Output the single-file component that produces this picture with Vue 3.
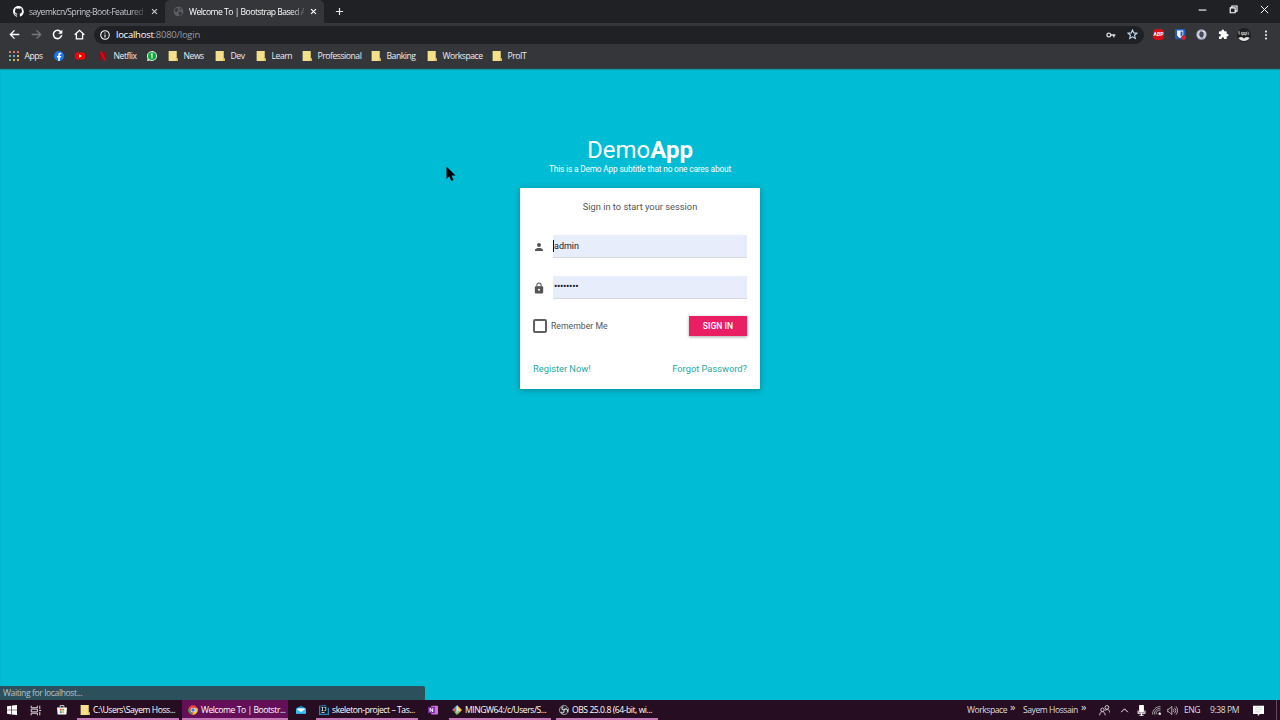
<template>
    <div class="screen">
        <svg class="sprite">
            <symbol id="github" viewBox="0 0 16 16"><path fill="#fff" d="M8 0C3.6 0 0 3.6 0 8c0 3.500 2.300 6.500 5.500 7.600.4.100.5-.2.500-.4v-1.500c-2.200.5-2.700-1-2.700-1-.4-.9-.9-1.200-.9-1.200-.7-.5.100-.5.100-.5.800.1 1.200.8 1.200.8.7 1.300 1.900.9 2.300.7.100-.5.300-.9.500-1.100-1.800-.2-3.600-.9-3.600-4 0-.9.300-1.600.8-2.100-.1-.2-.4-1 .1-2.100 0 0 .7-.2 2.200.8a7.500 7.500 0 0 1 4 0c1.500-1 2.200-.8 2.200-.8.5 1.100.2 1.900.1 2.100.5.600.8 1.300.8 2.100 0 3.100-1.900 3.700-3.600 3.900.3.300.5.800.5 1.500v2.200c0 .2.100.5.600.4A8 8 0 0 0 8 0z" /></symbol>
            <symbol id="world" viewBox="0 0 16 16"><circle cx="8" cy="8" r="7" fill="#5c5f63" /><path d="M3 4l4-1 1 3-3 3-2-1zM9 8l4 1-1 4-3 1-1-3zM10 2l3 3-3 1z" fill="#35363a" /></symbol>
            <symbol id="close" viewBox="0 0 10 10"><path d="M1.500 1.500l7 7m0-7l-7 7" stroke="currentColor" stroke-width="1.700" /></symbol>
            <symbol id="plus" viewBox="0 0 10 10"><path d="M5 1v8M1 5h8" stroke="#e8eaed" stroke-width="1.300" /></symbol>
            <symbol id="back" viewBox="0 0 16 16"><path d="M15 8H2m6-6L2 8l6 6" fill="none" stroke="currentColor" stroke-width="2" /></symbol>
            <symbol id="forward" viewBox="0 0 16 16"><path d="M1 8h13M8 2l6 6-6 6" fill="none" stroke="currentColor" stroke-width="2" /></symbol>
            <symbol id="reload" viewBox="0 0 16 16"><path d="M13 4.500A6 6 0 1 0 14 9" fill="none" stroke="#fff" stroke-width="2.200" /><path d="M15 1v6H9z" fill="#fff" /></symbol>
            <symbol id="home" viewBox="0 0 16 16"><path d="M1 8.500L8 2l7 6.500M3.500 7v7.500h9V7" fill="none" stroke="#fff" stroke-width="1.900" /></symbol>
            <symbol id="info" viewBox="0 0 16 16"><circle cx="8" cy="8" r="6.800" fill="none" stroke="#fff" stroke-width="1.700" /><path d="M8 7v5M8 4v1.700" stroke="#fff" stroke-width="1.800" /></symbol>
            <symbol id="apps" viewBox="0 0 10 10"><path d="M0 0h2v2H0zM4 0h2v2H4zM8 0h2v2H8z" fill="#d9776b" /><path d="M0 4h2v2H0z" fill="#66b87c" /><path d="M4 4h2v2H4z" fill="#6b9ee8" /><path d="M8 4h2v2H8zM4 8h2v2H4zM8 8h2v2H8z" fill="#d9b35b" /><path d="M0 8h2v2H0z" fill="#66b87c" /></symbol>
            <symbol id="facebook" viewBox="0 0 16 16"><circle cx="8" cy="8" r="8" fill="#1877f2" /><path d="M6.800 16v-5.500H4.700V8h2.100V6.300c0-2.300 1.300-3.400 3.200-3.400h1.700v2.200h-1.100c-1 0-1.300.6-1.300 1.200V8h2.300l-.4 2.500H9.300V16z" fill="#fff" /></symbol>
            <symbol id="youtube" viewBox="0 0 16 16"><rect y="2.500" width="16" height="11" rx="3" fill="#f00" /><path d="M6.500 5.300v5.400L11 8z" fill="#fff" /></symbol>
            <symbol id="netflix" viewBox="0 0 16 16"><path d="M3 1h3.500v14H3zM9.500 1H13v14H9.500z" fill="#9c0712" /><path d="M3 1h3.500L13 15H9.500z" fill="#d70b17" /></symbol>
            <symbol id="whatsapp" viewBox="0 0 16 16"><path d="M8 0a8 8 0 0 1 0 16l-4-1-4 1 1-4A8 8 0 0 1 8 0z" fill="#e8f5ea" /><circle cx="8" cy="8" r="6.500" fill="#09a83c" /><path d="M6 6l2-1.700V12" fill="none" stroke="#fff" stroke-width="1.700" /></symbol>
            <symbol id="folder" viewBox="0 0 16 16"><path d="M1 0h13v11l1.500 1v4H1z" fill="#f4df8b" /><path d="M13 11l2.500 1v4H12z" fill="#e3c369" /></symbol>
            <symbol id="key" viewBox="0 0 16 12"><circle cx="4.500" cy="6" r="3" fill="none" stroke="#ddd" stroke-width="2" /><path d="M7 6h8M12.500 6v3.500" stroke="#ddd" stroke-width="2.300" /></symbol>
            <symbol id="star" viewBox="0 0 16 16"><path d="M8 1.500l1.900 4.200 4.600.4-3.500 3 1.100 4.600L8 11.300l-4.100 2.400L5 9.100l-3.500-3 4.600-.4z" fill="none" stroke="#c3ddf3" stroke-width="1.600" /></symbol>
            <symbol id="shield" viewBox="0 0 16 16"><rect width="15" height="15" rx="2" fill="#205dc0" /><path d="M3 2h9v6c0 3-4 5-4.500 5S3 11 3 8z" fill="#fff" /><path d="M8 3.500h3V8c0 1.500-1.500 2.500-3 3z" fill="#205dc0" /><circle cx="12.500" cy="12.500" r="3.500" fill="#cf2336" /></symbol>
            <symbol id="swirl" viewBox="0 0 16 16"><circle cx="8" cy="8" r="7.500" fill="#a9aec2" /><ellipse cx="8" cy="8" rx="3" ry="4.300" fill="#44485b" /><path d="M5 3c-5 5-2 9 2 10M9 3c5 0 6 5 2 10" fill="none" stroke="#e4e6ee" stroke-width="1.500" /></symbol>
            <symbol id="puzzle" viewBox="0 0 24 24"><path fill="#fff" d="M20.500 11H19V7a2 2 0 0 0-2-2h-4V3.500a2.500 2.500 0 0 0-5 0V5H4a2 2 0 0 0-2 2v3.800h1.500a2.700 2.700 0 0 1 0 5.400H2V20c0 1.100.9 2 2 2h3.800v-1.500a2.700 2.700 0 0 1 5.400 0V22H17a2 2 0 0 0 2-2v-4h1.500a2.500 2.500 0 0 0 0-5z" /></symbol>
            <symbol id="avatar" viewBox="0 0 16 16"><circle cx="8" cy="8" r="8" fill="#1d1d1f" /><path d="M1.500 11.500q3-1.500 4.500-1l2 1.500 2-1.500q2-.5 4.500 1a8 8 0 0 1-13 0z" fill="#e6e6e6" /><path d="M1 4l2-1 1 4-2 1zM12 3l2 2v3h-2z" fill="#777" /><circle cx="8" cy="5.700" r="3.400" fill="#aaa" /><path d="M4.500 4.500c0-4 7-4 7 0zM5.500 5.300h2v1h-2zM8.500 5.300h2v1h-2zM6.500 8h3v1.500h-3z" fill="#202020" /></symbol>
            <symbol id="dots" viewBox="0 0 16 16"><circle cx="8" cy="2.500" r="1.700" fill="#eee" /><circle cx="8" cy="8" r="1.700" fill="#eee" /><circle cx="8" cy="13.500" r="1.700" fill="#eee" /></symbol>
            <symbol id="minimize" viewBox="0 0 10 10"><path d="M1.500 5.500h7" stroke="#fff" /></symbol>
            <symbol id="restore" viewBox="0 0 10 10"><path d="M2 3.500h4.500V8H2zM3.500 3V1.800h4.700v4.700H7" fill="none" stroke="#fff" /></symbol>
            <symbol id="exit" viewBox="0 0 10 10"><path d="M1.700 1.700l6.600 6.600m0-6.600L1.700 8.300" stroke="#fff" stroke-width=".9" /></symbol>
            <symbol id="person" viewBox="4 4 16 16"><path fill="#555" d="M12 12a4 4 0 1 0 0-8 4 4 0 0 0 0 8zm0 2c-2.700 0-8 1.300-8 4v2h16v-2c0-2.700-5.300-4-8-4z" /></symbol>
            <symbol id="lock" viewBox="3 0 18 23"><path fill="#555" d="M18 8h-1V6A5 5 0 0 0 7 6v2H6a2 2 0 0 0-2 2v10c0 1.100.9 2 2 2h12a2 2 0 0 0 2-2V10a2 2 0 0 0-2-2zm-6 9a2 2 0 1 1 0-4 2 2 0 0 1 0 4zM8.900 8V6a3.100 3.100 0 0 1 6.200 0v2z" /></symbol>
            <symbol id="windows" viewBox="0 0 16 16"><path d="M0 2l7-1v6.500H0zM8 .9L16 0v7.500H8zM0 8.500h7V15l-7-1zM8 8.500h8V16l-8-.9z" fill="#fff" /></symbol>
            <symbol id="taskview" viewBox="0 0 16 16"><path d="M1 1v3h9V1M1 15v-3h9v3M1 6h9v4H1zM13.500 1v5m0 4v5M12.500 8h3" fill="none" stroke="#eee" stroke-width="1.300" /></symbol>
            <symbol id="store" viewBox="0 0 16 16"><path d="M5 4V1h6v3" fill="none" stroke="#fff" stroke-width="1.300" /><path d="M0 4h16l-1 11H1z" fill="#fff" /><path d="M4.500 6h3v3h-3z" fill="#e44f2d" /><path d="M8.500 6h3v3h-3z" fill="#74ad26" /><path d="M4.500 10h3v3h-3z" fill="#2293d1" /><path d="M8.500 10h3v3h-3z" fill="#eeb31f" /></symbol>
            <symbol id="chrome" viewBox="0 0 16 16"><circle cx="8" cy="8" r="7.500" fill="#e94c3d" /><path d="M1 5l5 8 1 2.400A7.500 7.500 0 0 1 1 5z" fill="#34a853" /><path d="M8 5h7a7.500 7.500 0 0 1-8 10.400L11 9z" fill="#f7c739" /><circle cx="8" cy="8" r="3.800" fill="#fff" /><circle cx="8" cy="8" r="2.900" fill="#347ce1" /></symbol>
            <symbol id="mail" viewBox="0 0 16 16"><path d="M0 5l8-4 8 4v9H0z" fill="#1685d2" /><path d="M2 5h12v4l-6 3-6-3z" fill="#eef9ff" /><path d="M0 6l8 5 8-5v8H0z" fill="#3bbdf1" /></symbol>
            <symbol id="idea" viewBox="0 0 16 16"><path d="M0 1l10-1 6 5v11H0z" fill="#258ab9" /><path d="M2 2h12v12H2z" fill="#081522" /><path d="M4 4h3M5.500 4v5M4 9h3M8.500 4H11v4q0 1.500-2.500 1M4 12h5" fill="none" stroke="#fff" stroke-width="1.200" /></symbol>
            <symbol id="onenote" viewBox="0 0 16 16"><rect x="5" y="1" width="11" height="14" rx="1" fill="#ca75dd" /><rect y="3" width="11" height="10" fill="#7e28a4" /><path d="M3.500 11V5l4 6V5" fill="none" stroke="#fff" stroke-width="1.500" /></symbol>
            <symbol id="git" viewBox="0 0 16 16"><path d="M8 0v7L5 11 0 8z" fill="#5895d8" /><path d="M8 0l8 8-4 4-4-5z" fill="#f1c746" /><path d="M8 7l5 4-5 5-4-4z" fill="#77bc61" /><path d="M8 2v10M8 6l4 4" stroke="#fff" stroke-width="1.400" /><circle cx="4" cy="8" r="2" fill="#e85954" /></symbol>
            <symbol id="obs" viewBox="0 0 16 16"><circle cx="8" cy="8" r="7.300" fill="#222027" stroke="#ddd" /><path d="M8 8c-5-1-4-5-1-5m1 5c4-4 7 0 5 3M8 8c1 5-3 6-5 3" fill="none" stroke="#ddd" stroke-width="1.700" /></symbol>
            <symbol id="people" viewBox="0 0 16 16"><circle cx="5" cy="7" r="2.500" fill="none" stroke="#ddd" stroke-width="1.300" /><circle cx="11.500" cy="3.500" r="2.700" fill="none" stroke="#ddd" stroke-width="1.300" /><path d="M1 15c0-7 8-7 8 0M8.500 8c4-3 7-1 7 3" fill="none" stroke="#ddd" stroke-width="1.300" /></symbol>
            <symbol id="up" viewBox="0 0 16 16"><path d="M2 11l6-6 6 6" fill="none" stroke="#fff" stroke-width="1.700" /></symbol>
            <symbol id="mic" viewBox="0 0 16 16"><rect x="4.500" y="0" width="7" height="11" rx="1" fill="#fff" /><path d="M3 8v4h10V8M8 11v5M5 15h6" stroke="#fff" stroke-width="1.500" fill="none" /></symbol>
            <symbol id="wifi" viewBox="0 0 16 16"><path d="M1 15C1 7 7 1 15 1M4 15C4 9 9 4 15 4M7 15c0-4 3-8 8-8M11 15c0-2 2-4 4-4" fill="none" stroke="#bbb" stroke-width="1.500" /><circle cx="14" cy="14" r="2" fill="#eee" /></symbol>
            <symbol id="volume" viewBox="0 0 16 16"><path d="M1 6h2l4-4v12l-4-4H1zM9 6q2 2 0 4M11 4q4 4 0 8M13 2q5 6 0 12" fill="none" stroke="#ddd" stroke-width="1.100" /></symbol>
            <symbol id="notice" viewBox="0 0 16 16"><path d="M0 1h16v12h-6l-3 3v-3H0z" fill="#fff" /><path d="M3 4h10M3 7h10M3 10h7" stroke="#aaa" stroke-width=".7" /></symbol>
        </svg>

        <header class="tabs">
            <div class="tab">
                <svg class="icon"><use href="#github" /></svg>
                <span class="tab-title">sayemkcn/Spring-Boot-Featured</span>
                <svg class="tab-close"><use href="#close" /></svg>
            </div>
            <div class="tab active">
                <svg class="icon"><use href="#world" /></svg>
                <span class="tab-title">Welcome To | Bootstrap Based A</span>
                <svg class="tab-close"><use href="#close" /></svg>
            </div>
            <svg class="new-tab"><use href="#plus" /></svg>
            <div class="window-buttons">
                <svg v-for="name in ['minimize', 'restore', 'exit']" :key="name"><use :href="'#' + name" /></svg>
            </div>
        </header>

        <div class="toolbar">
            <svg class="nav-icon"><use href="#back" /></svg>
            <svg class="nav-icon muted"><use href="#forward" /></svg>
            <svg class="nav-icon"><use href="#reload" /></svg>
            <svg class="nav-icon"><use href="#home" /></svg>
            <div class="address">
                <svg class="icon"><use href="#info" /></svg>
                <span class="url">localhost<span class="path">:8080/login</span></span>
                <svg class="key"><use href="#key" /></svg>
                <svg class="star"><use href="#star" /></svg>
            </div>
            <div class="extensions">
                <span class="abp">ABP</span>
                <svg v-for="name in extensions" :key="name" :class="name"><use :href="'#' + name" /></svg>
            </div>
        </div>

        <nav class="bookmarks">
            <div class="bookmark" v-for="item in bookmarks" :key="item.icon + item.text">
                <svg class="icon"><use :href="'#' + item.icon" /></svg>
                <span v-if="item.text">{{ item.text }}</span>
            </div>
        </nav>

        <main class="page">
            <div class="logo">
                <h1>Demo<b>App</b></h1>
                <small>This is a Demo App subtitle that no one cares about</small>
            </div>
            <form class="card" @submit.prevent>
                <p class="msg">Sign in to start your session</p>
                <div class="field">
                    <svg class="person"><use href="#person" /></svg>
                    <div class="input"><i class="caret"></i>{{ username }}</div>
                </div>
                <div class="field">
                    <svg class="lock"><use href="#lock" /></svg>
                    <div class="input password">••••••••</div>
                </div>
                <div class="actions">
                    <span class="checkbox"></span>
                    <label>Remember Me</label>
                    <button>SIGN IN</button>
                </div>
                <div class="links">
                    <a>Register Now!</a>
                    <a>Forgot Password?</a>
                </div>
            </form>
            <div class="status">Waiting for localhost...</div>
            <svg class="cursor" viewBox="0 0 10 16"><path d="M.5.500v12.500l2.800-2.700 2 4.700 2.200-1-2-4.500h4z" fill="#000" /></svg>
        </main>

        <footer class="taskbar">
            <div class="tasks">
                <div class="task" v-for="item in tasks" :key="item.icon" :class="{ open: item.text, current: item.icon === 'chrome' }">
                    <svg class="icon" :class="item.icon"><use :href="'#' + item.icon" /></svg>
                    <span v-if="item.text">{{ item.text }}</span>
                </div>
            </div>
            <div class="tray">
                <span>Workspace</span>
                <span class="more">»</span>
                <span>Sayem Hossain</span>
                <span class="more">»</span>
                <svg v-for="name in ['people', 'up', 'mic', 'wifi', 'volume']" :key="name" :class="name"><use :href="'#' + name" /></svg>
                <span>ENG</span>
                <span>9:38 PM</span>
                <svg class="notice"><use href="#notice" /></svg>
                <i class="desktop"></i>
            </div>
        </footer>
    </div>
</template>

<script setup>
    import { ref } from 'vue'

    const username = ref('admin')

    const extensions = ['shield', 'swirl', 'puzzle', 'avatar', 'dots']

    // 书签栏
    const bookmarks = [
        { icon: 'apps', text: 'Apps' },
        { icon: 'facebook', text: '' },
        { icon: 'youtube', text: '' },
        { icon: 'netflix', text: 'Netflix' },
        { icon: 'whatsapp', text: '' },
        { icon: 'folder', text: 'News' },
        { icon: 'folder', text: 'Dev' },
        { icon: 'folder', text: 'Learn' },
        { icon: 'folder', text: 'Professional' },
        { icon: 'folder', text: 'Banking' },
        { icon: 'folder', text: 'Workspace' },
        { icon: 'folder', text: 'ProIT' }
    ]

    // 任务栏
    const tasks = [
        { icon: 'windows' },
        { icon: 'taskview' },
        { icon: 'store' },
        { icon: 'folder', text: 'C:\\Users\\Sayem Hoss...' },
        { icon: 'chrome', text: 'Welcome To | Bootstr...' },
        { icon: 'mail' },
        { icon: 'idea', text: 'skeleton-project – Tas...' },
        { icon: 'onenote' },
        { icon: 'git', text: 'MINGW64:/c/Users/S...' },
        { icon: 'obs', text: 'OBS 25.0.8 (64-bit, wi...' }
    ]
</script>

<style>
    body{
        background: #00bcd4;
        overflow: hidden;
    }
</style>

<style scoped>
    .screen{
        width: 1280px;
        height: 720px;
        display: flex;
        flex-direction: column;
        box-sizing: border-box;
        font-family: "Open Sans", "Noto Sans", sans-serif;
        font-size: 8.600px;
        letter-spacing: -.45px;
        color: #eee;
        white-space: nowrap;
    }
    .screen *{
        box-sizing: border-box;
    }
    .sprite{
        position: absolute;
        width: 0;
        height: 0;
    }
    svg{
        display: block;
        flex: none;
    }
    .icon{
        width: 10px;
        height: 10px;
    }
    .tabs{
        height: 23px;
        flex: none;
        display: flex;
        background: #202124;
    }
    .tab{
        width: 165px;
        height: 23px;
        padding: 0 7px 0 13px;
        display: flex;
        align-items: center;
        color: #c4c7cc;
    }
    .tab .icon{
        width: 11px;
        height: 11px;
        margin-right: 5px;
    }
    .tab.active{
        width: 159px;
        padding: 0 7px 0 8px;
        border-radius: 5px 5px 0 0;
        background: #35363a;
        color: #fff;
    }
    .tab-title{
        width: 115px;
        letter-spacing: -.52px;
        -webkit-mask-image: linear-gradient(to right, #000 88%, rgba(0, 0, 0, .2));
        mask-image: linear-gradient(to right, #000 88%, rgba(0, 0, 0, .2));
    }
    .tab-close{
        width: 7px;
        height: 7px;
        margin-left: auto;
    }
    .new-tab{
        width: 9px;
        height: 9px;
        margin: 7px 0 0 11px;
    }
    .window-buttons{
        display: flex;
        gap: 20px;
        margin: 4px 10px 0 auto;
    }
    .window-buttons svg{
        width: 11px;
        height: 11px;
    }
    .toolbar{
        height: 23px;
        flex: none;
        display: flex;
        align-items: center;
        background: #35363a;
        padding: 0 9px;
        color: #fff;
    }
    .nav-icon{
        width: 11px;
        height: 11px;
        margin-right: 10.500px;
    }
    .muted{
        color: #77797d;
    }
    .address{
        width: 1050px;
        height: 18px;
        border-radius: 9px;
        background: #202124;
        display: flex;
        align-items: center;
        padding: 0 6px;
        margin-left: -1px;
        font-size: 9.500px;
        letter-spacing: -.25px;
    }
    .url{
        margin-left: 6px;
        margin-right: auto;
    }
    .path{
        color: #999ca1;
    }
    .key{
        width: 10px;
        height: 8px;
    }
    .star{
        width: 11px;
        height: 11px;
        margin-left: 11px;
    }
    .extensions{
        display: flex;
        align-items: center;
        gap: 10.500px;
        margin-left: 9px;
    }
    .extensions svg{
        width: 11px;
        height: 11px;
    }
    .abp{
        width: 11px;
        height: 11px;
        line-height: 11px;
        border-radius: 4px;
        background: #d80d16;
        text-align: center;
        font-family: Roboto, sans-serif;
        font-size: 5px;
        font-weight: 700;
        letter-spacing: 0;
    }
    .extensions .avatar{
        width: 14px;
        height: 14px;
        margin-left: -2px;
    }
    .extensions .dots{
        width: 10px;
        height: 10px;
        margin-left: -1px;
    }
    .bookmarks{
        height: 23px;
        flex: none;
        display: grid;
        grid-template-columns: 45px 21px 23px 49px 21px 47px 41px 46px 69px 56px 65px 45px;
        align-items: center;
        padding-left: 9px;
        padding-bottom: 3px;
        background: #35363a;
        border-bottom: 1px solid #2b454d;
    }
    .bookmark{
        display: flex;
        align-items: center;
        gap: 5.500px;
    }
    .page{
        position: relative;
        height: 631px;
        flex: none;
        padding-top: 67px;
        background: #00bcd4;
        font-family: Roboto, sans-serif;
        letter-spacing: 0;
        box-shadow: inset 0 1px 1px #168fa0;
    }
    .logo{
        text-align: center;
        color: #fff;
    }
    .logo h1{
        margin: 0;
        font-size: 24px;
        line-height: 28px;
        font-weight: 400;
    }
    .logo small{
        display: block;
        font-size: 8.300px;
        line-height: 10px;
        letter-spacing: -.16px;
    }
    .card{
        width: 240px;
        height: 201px;
        margin: 14px auto 0;
        padding: 13px;
        background: #fff;
        box-shadow: 0 1px 6px rgba(0, 0, 0, .3);
        color: #555;
        font-size: 9.300px;
    }
    .msg{
        margin: 0 0 28px;
        line-height: 12px;
        padding-bottom: 1px;
        text-align: center;
    }
    .field{
        display: flex;
        height: 23px;
        margin: -7px 0 25px;
        align-items: center;
    }
    .person{
        width: 8px;
        height: 8px;
        margin: 1px 12px 0 2px;
    }
    .lock{
        width: 10px;
        height: 12px;
        margin: 0 11px 0 1px;
    }
    .input{
        width: 194px;
        height: 23px;
        margin-left: -2px;
        padding-left: 1px;
        line-height: 22px;
        background: #e8edfb;
        border-bottom: 1px solid #d8dae2;
        font-size: 9px;
        color: #171923;
        position: relative;
    }
    .caret{
        position: absolute;
        left: 0;
        top: 5px;
        width: 1px;
        height: 12px;
        background: #111;
    }
    .password{
        font-size: 10px;
        letter-spacing: -.35px;
    }
    .field + .field{
        margin-top: -7px;
        margin-bottom: 17px;
    }
    .actions{
        display: flex;
        align-items: center;
        height: 20px;
        font-size: 8.700px;
    }
    .checkbox{
        width: 14px;
        height: 14px;
        margin-right: 4px;
        border: 2px solid #606060;
        border-radius: 2px;
    }
    button{
        width: 58px;
        height: 20px;
        margin-left: auto;
        padding: 0;
        border: 0;
        background: #e91e63;
        box-shadow: 0 1px 3px rgba(0, 0, 0, .35);
        color: #fff;
        font: 500 8.600px Roboto, sans-serif;
    }
    .links{
        display: flex;
        justify-content: space-between;
        margin-top: 26px;
        line-height: 13px;
        color: #25aaa4;
    }
    .status{
        position: absolute;
        left: 0;
        bottom: 0;
        width: 425px;
        height: 14px;
        padding-left: 3px;
        background: #2c505c;
        border-radius: 0 2px 0 0;
        line-height: 14px;
        font-family: "Open Sans", sans-serif;
        letter-spacing: -.4px;
        color: #b5c3c7;
    }
    .cursor{
        position: absolute;
        left: 446px;
        top: 97px;
        width: 10px;
        height: 16px;
    }
    .taskbar{
        height: 20px;
        flex: none;
        display: flex;
        justify-content: space-between;
        background: #260d21;
        color: #fff;
    }
    .tasks{
        display: grid;
        grid-template-columns: 23px 27px 20px 105px 114px 20px 112px 21px 107px 101px;
        padding-left: 7px;
    }
    .task{
        display: flex;
        align-items: center;
        gap: 3px;
        height: 20px;
    }
    .task .taskview{
        width: 12px;
        height: 11px;
    }
    .task.open{
        width: 102px;
        padding-left: 3px;
        border-bottom: 2px solid #c778b7;
        padding-top: 1px;
    }
    .task.current{
        width: 106px;
        padding-left: 6px;
        background: #650f59;
    }
    .tray{
        display: grid;
        grid-template-columns: 43px 13px 58px 18px 21px 16px 16px 15px 17px 26px 43px 23px 4px;
        align-items: center;
        color: #ddd;
    }
    .tray svg{
        width: 11px;
        height: 11px;
    }
    .tray .up, .tray .wifi{
        width: 9px;
        height: 9px;
    }
    .more{
        font-size: 11px;
        line-height: 12px;
        margin-top: -6px;
    }
    .desktop{
        height: 20px;
        border-left: 1px solid #604b5d;
    }
</style>
